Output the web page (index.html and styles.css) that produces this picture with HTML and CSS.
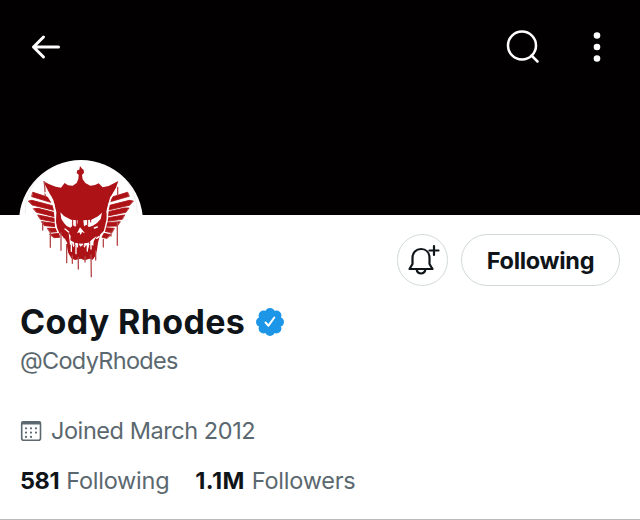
FILE: index.html
```html
<!DOCTYPE html>
<html lang="en">
<head>
<meta charset="utf-8">
<title>Cody Rhodes</title>
<link rel="stylesheet" href="styles.css">
</head>
<body>
<main class="screen">
  <header class="banner">
    <svg class="back" viewBox="0 0 32 28"><path d="M29.500 14H4.500M14.500 4L4.500 14l10 10"/></svg>
    <svg class="search" viewBox="0 0 36 36"><circle cx="17" cy="16.500" r="14"/><path d="M26.500 26.500l6 6"/></svg>
    <svg class="more" viewBox="0 0 8 32"><circle cx="4" cy="4.500" r="3.300"/><circle cx="4" cy="16" r="3.300"/><circle cx="4" cy="27.500" r="3.300"/></svg>
  </header>
  <section class="profile">
    <div class="head">
      <div class="avatar">
        <svg viewBox="27 30 372 372">
          <path class="ring" d="M45 190A168 168 0 0 1 382 190"/>
          <g class="red">
            <path d="M99 93L118 103L137 110L153 113L164 99L174 106L188 107L200 99L205 87L206 74L200 69L202 61L208 59L210 48L215 55L221 60L222 68L216 75L218 88L226 99L241 107L255 105L266 100L278 112L296 108L325 93L318 113L307 132L295 160L289 185L292 211L284 240L270 254L264 278L261 300L256 318L248 329L238 326L224 331L212 326L195 330L184 325L175 309L169 281L159 260L144 246L138 218L139 186L130 150L116 125Z"/>
            <path class="wing" d="M69 127L112 141L122 157L66 140ZM56 153L66 151L127 167L131 181L67 165ZM71 176L84 175L131 187L133 200L80 187ZM84 195L134 205L135 216L92 208ZM95 215L134 220L137 230L104 227ZM113 235L138 235L142 245L121 247ZM120 253L146 250L149 262L133 263Z"/>
            <path class="wing" d="M352 127L309 140L301 155L357 139ZM369 153L358 151L299 166L295 180L358 166ZM356 174L343 174L295 185L293 198L347 187ZM343 195L295 203L293 214L336 208ZM330 215L292 218L289 229L321 228ZM312 235L287 233L284 244L305 248ZM302 254L282 250L276 262L290 265Z"/>
          </g>
          <path class="drip" d="M103 96L106 137M98 215V240M121 244V292M153 248V301M170 279V338M187 318V340M205 322V357M225 320V336M243 315L244 380M257 302V330M280 268V291M323 112V134M322 218V286M303 246V258"/>
          <g class="cut">
            <path d="M151 187L162 198L183 209L203 211L202 222L196 230L189 226L181 233L170 228L162 219L154 207ZM276 188L264 199L244 209L220 211L222 229L230 224L236 231L247 228L261 219L272 207ZM210 232L201 250L208 247L212 255L216 246L225 250Z"/>
            <path d="M176 248L182 258L181 271L194 278L213 281L235 278L249 266L260 258L251 274L250 287L238 283L235 297L229 284L223 293L219 285L211 290L207 284L202 294L197 284L190 292L186 279L180 286Z"/>
          </g>
          <path class="scratch" d="M105 128L122 140L131 161L135 193L137 231L145 247M318 123L302 143L294 180L291 211L283 245M163 267L170 280M260 265L267 260M184 282V304M198 287V311M232 284V303M243 281V297M165 237L176 246M253 234L262 231"/>
          <path class="pupil" d="M188 209V228M199 209V225M233 207V226M242 206V216M194 271V286M206 273V287M221 273V287M239 269V281"/>
        </svg>
      </div>
      <div class="actions">
        <div class="notify">
          <svg viewBox="0 0 34 32"><path d="M3.500 25l3-5v-6c0-5.500 3.500-9 8.500-9s8.500 3.500 8.500 9v6l3 5zM10.500 25c.5 3 2 4.500 4.500 4.500s4-1.500 4.500-4.500M28 2v9M23.500 6.500h9"/></svg>
        </div>
        <div class="follow"><span>Following</span></div>
      </div>
    </div>
    <h1 class="name"><span>Cody Rhodes</span>
      <svg viewBox="0 0 28 28"><g class="badge"><circle cx="14" cy="14" r="11"/><circle cx="14" cy="5" r="5"/><circle cx="20.400" cy="7.600" r="5"/><circle cx="23" cy="14" r="5"/><circle cx="20.400" cy="20.400" r="5"/><circle cx="14" cy="23" r="5"/><circle cx="7.600" cy="20.400" r="5"/><circle cx="5" cy="14" r="5"/><circle cx="7.600" cy="7.600" r="5"/></g><path class="check" d="M9.500 14.500l3 3.200 5.800-8.200"/></svg>
    </h1>
    <div class="handle"><span>@CodyRhodes</span></div>
    <div class="joined">
      <svg viewBox="0 0 22 22"><rect class="frame" x="1.700" y="1.700" width="18.800" height="18.600" rx="2"/><path class="fill" d="M1.500 1.500h19v3h-19z"/><path class="dots" d="M6 8.300h0M11 8.300h0M16 8.300h0M6 12.600h0M11 12.600h0M16 12.600h0M6 16.900h0M11 16.900h0"/></svg>
      <span>Joined March 2012</span>
    </div>
    <div class="stats">
      <div class="stat following"><b>581</b><span>Following</span></div>
      <div class="stat followers"><b>1.1M</b><span>Followers</span></div>
    </div>
  </section>
</main>
</body>
</html>
```
FILE: styles.css
```css
* { box-sizing: border-box; }
body {
  margin: 0;
  background: #fff;
  color: #0f1419;
  font-family: Inter, "Liberation Sans", sans-serif;
  font-size: 23.5px;
}
svg { display: block; flex: none; fill: none; stroke-linecap: round; stroke-linejoin: round; }
.screen { display: flex; flex-direction: column; height: 520px; overflow: hidden; }
.banner {
  display: flex;
  align-items: flex-start;
  flex: none;
  height: 215px;
  padding: 29px 39px 0 29px;
  background: #020000;
}
.banner svg { stroke: #fff; stroke-width: 2.5; }
.back { width: 32px; height: 28px; margin-top: 4px; }
.banner .back { stroke-width: 3; }
.search { width: 36px; height: 36px; margin-left: auto; }
.banner .more { width: 8px; height: 32px; margin: 2px 0 0 52px; fill: #fff; stroke: none; }
.profile { flex: 1; padding: 0 20px; border-bottom: 1px solid #b9b9b9; }
.head { display: flex; justify-content: space-between; align-items: flex-start; height: 87px; }
.avatar {
  width: 124px;
  height: 124px;
  margin: -55px 0 0 -1px;
  border-radius: 50%;
  background: #fff;
  overflow: hidden;
}
.avatar svg { width: 124px; height: 124px; }
.ring { stroke: #ddd; stroke-width: 1.5; }
.red { fill: #ad1216; }
.wing { stroke: #ad1216; stroke-width: 2.5; }
.drip { stroke: #b54a4c; stroke-width: 4; }
.cut { fill: #fff; }
.scratch { stroke: #fff; stroke-width: 4; }
.pupil { stroke: #ad1216; stroke-width: 3; }
.actions { display: flex; gap: 13px; margin-top: 19px; }
.notify, .follow {
  display: flex;
  align-items: center;
  justify-content: center;
  height: 52px;
  border: 1.5px solid #d3d9d9;
  border-radius: 26px;
}
.notify { width: 51px; }
.notify svg { width: 34px; height: 32px; margin-bottom: 1px; stroke: #0f1419; stroke-width: 2.2; }
.follow { width: 159px; font-weight: 700; letter-spacing: -0.3px; }
.name { display: flex; align-items: center; gap: 11px; margin: 0; font-size: 34px; line-height: 40px; letter-spacing: 0.35px; }
.name svg { width: 28px; height: 28px; }
.badge { fill: #1d96e8; }
.check { stroke: #fff; stroke-width: 2; }
.handle, .joined, .stats { color: #5b686f; }
.handle { line-height: 38px; letter-spacing: -0.7px; }
.joined { display: flex; align-items: center; gap: 9px; margin-top: 36px; line-height: 30px; letter-spacing: -0.44px; }
.joined svg { width: 22px; height: 22px; }
.frame { stroke: #5b686f; stroke-width: 1.6; }
.fill { fill: #5b686f; }
.dots { stroke: #5b686f; stroke-width: 2.2; }
.stats { display: flex; gap: 26px; margin-top: 19px; line-height: 31px; letter-spacing: -0.25px; }
.stat { display: flex; gap: 7px; }
.stat b { color: #0f1419; }
.following b { letter-spacing: -0.4px; }
.followers b { letter-spacing: 0.4px; }
```
